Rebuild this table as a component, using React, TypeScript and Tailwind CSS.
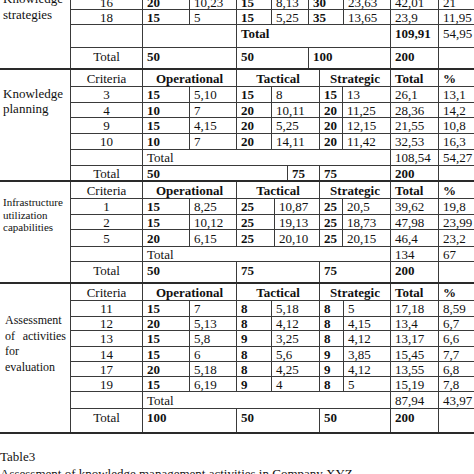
import React from 'react';
import clsx from 'clsx';

type Cell = { t?: string; w?: string; b?: boolean; c?: boolean };

// one table line; the last cell runs to the right edge of the page
function Row({ h, cells, top, last }: { h: string; cells: Cell[]; top?: boolean; last?: boolean }) {
  return (
    <div className={clsx('flex', h, !last && 'border-b border-[#3a3a3a]')}>
      {cells.map((c, i) => {
        const end = i === cells.length - 1;
        return (
          <div
            key={i}
            className={clsx(
              'flex px-1 leading-[15px] whitespace-nowrap',
              end ? 'flex-1' : 'shrink-0 border-r border-[#3a3a3a]',
              c.w,
              c.b && 'font-bold',
              c.c && 'justify-center',
              top ? 'items-start pt-[1px]' : 'items-center'
            )}
          >
            {c.t}
          </div>
        );
      })}
    </div>
  );
}

// data row: criteria, op, op value, tac, tac value, str, str value, total, %
function dataCells(v: string[], w: string[]): Cell[] {
  return [
    { t: v[0], w: 'w-[72px]', c: true },
    { t: v[1], w: 'w-[47px]', b: true },
    { t: v[2], w: 'w-[47px]' },
    { t: v[3], w: w[0], b: true },
    { t: v[4], w: w[1] },
    { t: v[5], w: w[2], b: true },
    { t: v[6], w: w[3] },
    { t: v[7], w: 'w-[48px]' },
    { t: v[8] },
  ];
}

const header: Cell[] = [
  { t: 'Criteria', w: 'w-[72px]', c: true },
  { t: 'Operational', w: 'w-[94px]', b: true, c: true },
  { t: 'Tactical', w: 'w-[83px]', b: true, c: true },
  { t: 'Strategic', w: 'w-[71px]', b: true, c: true },
  { t: 'Total', w: 'w-[48px]', b: true },
  { t: '%', b: true },
];

function totalRow(sum: string, pct: string): Cell[] {
  return [
    { w: 'w-[72px]' },
    { t: 'Total', w: 'w-[248px]' },
    { t: sum, w: 'w-[48px]' },
    { t: pct },
  ];
}

const s1w = ['w-[35px]', 'w-[37px]', 'w-[35px]', 'w-[47px]'];
const s2w = ['w-[35px]', 'w-[48px]', 'w-[23px]', 'w-[48px]'];
const s3w = ['w-[38px]', 'w-[45px]', 'w-[23px]', 'w-[48px]'];
const s4w = ['w-[35px]', 'w-[48px]', 'w-[24px]', 'w-[47px]'];

function Section({ label, children }: { label: React.ReactNode; children: React.ReactNode }) {
  return (
    <div className="flex border-b-2 border-[#2a2a2a]">
      <div className="w-[71px] shrink-0 border-r border-[#3a3a3a]">{label}</div>
      <div className="flex-1 flex flex-col">{children}</div>
    </div>
  );
}

export default function App() {
  return (
    <div className="w-[474px] h-[474px] overflow-hidden bg-white text-[#111] text-[13px] font-['Liberation_Serif','Times_New_Roman',serif]">
      <div className="-mt-[5px]">
        {/* Knowledge strategies (top is cut off) */}
        <Section
          label={
            <div className="pl-[3px] -mt-[4px] leading-[16px] text-[13px]">
              Knowledge
              <br />
              strategies
            </div>
          }
        >
          <Row h="h-[15px]" cells={dataCells(['16', '20', '10,23', '15', '8,13', '30', '23,63', '42,01', '21'], s1w)} />
          <Row h="h-[15px]" cells={dataCells(['18', '15', '5', '15', '5,25', '35', '13,65', '23,9', '11,95'], s1w)} />
          <Row
            h="h-[23px]"
            top
            cells={[
              { w: 'w-[72px]' },
              { w: 'w-[94px]' },
              { t: 'Total', w: 'w-[154px]', b: true },
              { t: '109,91', w: 'w-[48px]', b: true },
              { t: '54,95' },
            ]}
          />
          <Row
            h="h-[20px]"
            top
            last
            cells={[
              { t: 'Total', w: 'w-[72px]', c: true },
              { t: '50', w: 'w-[94px]', b: true },
              { t: '50', w: 'w-[72px]', b: true },
              { t: '100', w: 'w-[82px]', b: true },
              { t: '200', w: 'w-[48px]', b: true },
              {},
            ]}
          />
        </Section>

        {/* Knowledge planning */}
        <Section
          label={
            <div className="pl-[3px] pt-[16px] leading-[15px] text-[13px]">
              Knowledge
              <br />
              planning
            </div>
          }
        >
          <Row h="h-[17px]" cells={header} />
          <Row h="h-[16px]" cells={dataCells(['3', '15', '5,10', '15', '8', '15', '13', '26,1', '13,1'], s2w)} />
          <Row h="h-[15px]" cells={dataCells(['4', '10', '7', '20', '10,11', '20', '11,25', '28,36', '14,2'], s2w)} />
          <Row h="h-[16px]" cells={dataCells(['9', '15', '4,15', '20', '5,25', '20', '12,15', '21,55', '10,8'], s2w)} />
          <Row h="h-[16px]" cells={dataCells(['10', '10', '7', '20', '14,11', '20', '11,42', '32,53', '16,3'], s2w)} />
          <Row h="h-[16px]" cells={totalRow('108,54', '54,27')} />
          <Row
            h="h-[14px]"
            last
            cells={[
              { t: 'Total', w: 'w-[72px]', c: true },
              { t: '50', w: 'w-[145px]', b: true },
              { t: '75', w: 'w-[32px]', b: true },
              { t: '75', w: 'w-[71px]', b: true },
              { t: '200', w: 'w-[48px]', b: true },
              {},
            ]}
          />
        </Section>

        {/* Infrastructure utilization capabilities */}
        <Section
          label={
            <div className="pl-[3px] pt-[14px] leading-[12.5px] text-[11px]">
              Infrastructure
              <br />
              utilization
              <br />
              capabilities
            </div>
          }
        >
          <Row h="h-[17px]" cells={header} />
          <Row h="h-[16px]" cells={dataCells(['1', '15', '8,25', '25', '10,87', '25', '20,5', '39,62', '19,8'], s3w)} />
          <Row h="h-[15px]" cells={dataCells(['2', '15', '10,12', '25', '19,13', '25', '18,73', '47,98', '23,99'], s3w)} />
          <Row h="h-[17px]" cells={dataCells(['5', '20', '6,15', '25', '20,10', '25', '20,15', '46,4', '23,2'], s3w)} />
          <Row h="h-[15px]" cells={totalRow('134', '67')} />
          <Row
            h="h-[20px]"
            top
            last
            cells={[
              { t: 'Total', w: 'w-[72px]', c: true },
              { t: '50', w: 'w-[94px]', b: true },
              { t: '75', w: 'w-[83px]', b: true },
              { t: '75', w: 'w-[71px]', b: true },
              { t: '200', w: 'w-[48px]', b: true },
              {},
            ]}
          />
        </Section>

        {/* Assessment of activities for evaluation */}
        <Section
          label={
            <div className="pl-[5px] pt-[29px] w-[66px] leading-[15.5px] text-[12px] text-justify">
              Assessment of activities for evaluation
            </div>
          }
        >
          <Row h="h-[17px]" cells={header} />
          <Row h="h-[16px]" cells={dataCells(['11', '15', '7', '8', '5,18', '8', '5', '17,18', '8,59'], s4w)} />
          <Row h="h-[14px]" cells={dataCells(['12', '20', '5,13', '8', '4,12', '8', '4,15', '13,4', '6,7'], s4w)} />
          <Row h="h-[16px]" cells={dataCells(['13', '15', '5,8', '9', '3,25', '8', '4,12', '13,17', '6,6'], s4w)} />
          <Row h="h-[15px]" cells={dataCells(['14', '15', '6', '8', '5,6', '9', '3,85', '15,45', '7,7'], s4w)} />
          <Row h="h-[15px]" cells={dataCells(['17', '20', '5,18', '8', '4,25', '9', '4,12', '13,55', '6,8'], s4w)} />
          <Row h="h-[15px]" cells={dataCells(['19', '15', '6,19', '9', '4', '8', '5', '15,19', '7,8'], s4w)} />
          <Row h="h-[17px]" cells={totalRow('87,94', '43,97')} />
          <Row
            h="h-[23px]"
            top
            last
            cells={[
              { t: 'Total', w: 'w-[72px]', c: true },
              { t: '100', w: 'w-[94px]', b: true },
              { t: '50', w: 'w-[83px]', b: true },
              { t: '50', w: 'w-[71px]', b: true },
              { t: '200', w: 'w-[48px]', b: true },
              {},
            ]}
          />
        </Section>
      </div>

      {/* caption */}
      <div className="mt-[14px] leading-[17px] text-[13px]">
        <div>Table3</div>
        <div className="whitespace-nowrap">Assessment of knowledge management activities in Company XYZ</div>
      </div>
    </div>
  );
}
